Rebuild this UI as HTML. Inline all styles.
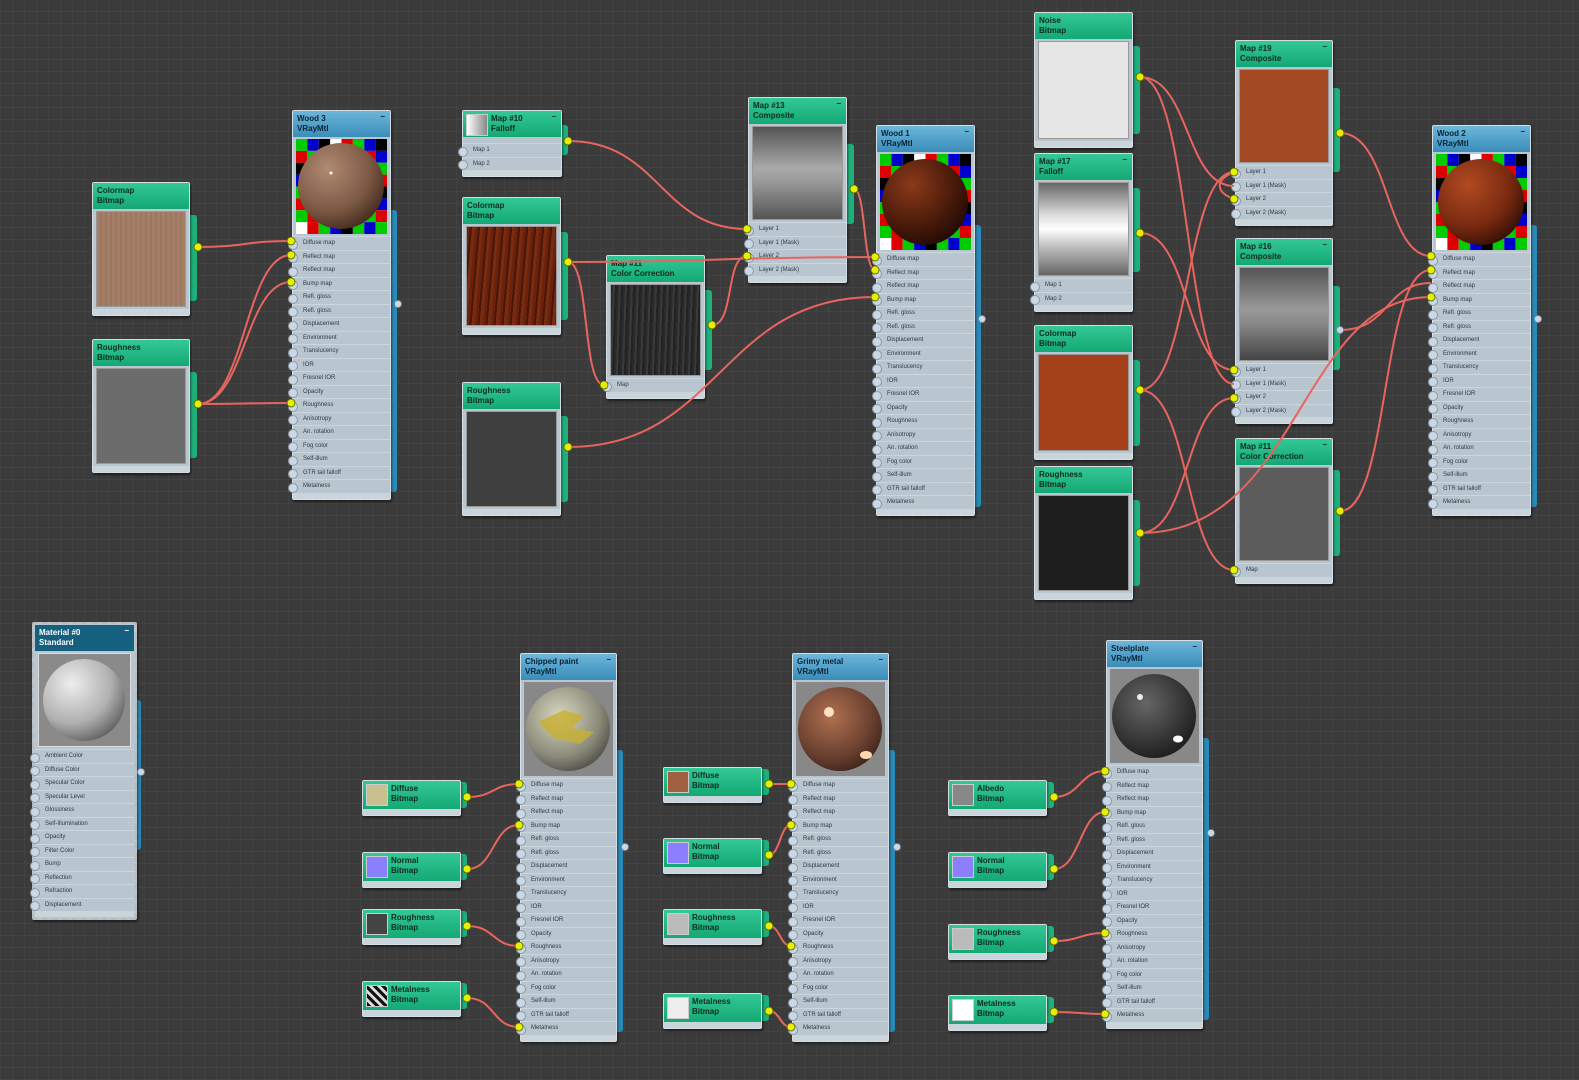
<!DOCTYPE html>
<html><head><meta charset="utf-8">
<style>
*{margin:0;padding:0;box-sizing:border-box}
body{width:1579px;height:1080px;overflow:hidden;position:relative;
background-color:#3b3b3b;
background-image:repeating-linear-gradient(0deg,rgba(255,255,255,.035) 0 1px,transparent 1px 12px),repeating-linear-gradient(90deg,rgba(255,255,255,.035) 0 1px,transparent 1px 12px);
font-family:"Liberation Sans",sans-serif}
.n{position:absolute;background:#b9c6cf;border:1px solid #d5dee4;border-radius:2px;box-shadow:1px 2px 2px rgba(0,0,0,.5)}
.gh,.bh,.sh{height:26px;padding:3px 4px;font-size:8px;font-weight:bold;line-height:10px;color:#0d2a20;position:relative}
.gh{background:linear-gradient(#33c896,#14a874)}
.bh{background:linear-gradient(#6cb6da,#3a8dba);color:#0c2233}
.sh{background:#16607f;color:#fff}
.x{position:absolute;right:5px;top:1px;font-weight:bold}
.img{margin:2px 3px;border:1px solid #999}
.ft{height:6px;background:#c9d4db}
.r{height:13.5px;line-height:13.5px;font-size:6px;color:#2c3a44;padding-left:10px;border-top:1px solid #cbd6de;position:relative;white-space:nowrap}
.r:before{content:"";position:absolute;left:-5px;top:2.5px;width:8px;height:8px;border-radius:50%;background:#c9d8e4;border:1px solid #8a9aa6}
.pv{margin:2px 3px;position:relative;overflow:hidden}
.tab{position:absolute;background:#1db07a;border-radius:0 3px 3px 0}
.btab{position:absolute;background:#2a8ab8;border-radius:0 3px 3px 0}
.sm .gh{height:28px;padding-left:28px}
.th{position:absolute;left:3px;top:3px;width:22px;height:22px;border:1px solid #ccc}
</style></head><body>
<svg width="0" height="0" style="position:absolute"><defs>
<symbol id="chk" viewBox="0 0 8 8" preserveAspectRatio="none">
<rect width="8" height="8" fill="#fff"/>
<g>
<rect x="0" y="0" width="1" height="1" fill="#0c0"/><rect x="1" y="0" width="1" height="1" fill="#00c"/><rect x="2" y="0" width="1" height="1" fill="#000"/><rect x="4" y="0" width="1" height="1" fill="#d00"/><rect x="5" y="0" width="1" height="1" fill="#0c0"/><rect x="6" y="0" width="1" height="1" fill="#00c"/><rect x="7" y="0" width="1" height="1" fill="#000"/>
<rect x="0" y="1" width="1" height="1" fill="#d00"/><rect x="1" y="1" width="1" height="1" fill="#0c0"/><rect x="3" y="1" width="1" height="1" fill="#00c"/><rect x="5" y="1" width="1" height="1" fill="#000"/><rect x="6" y="1" width="1" height="1" fill="#d00"/><rect x="7" y="1" width="1" height="1" fill="#00c"/>
<rect x="0" y="2" width="1" height="1" fill="#000"/><rect x="7" y="2" width="1" height="1" fill="#0c0"/>
<rect x="0" y="3" width="1" height="1" fill="#00c"/><rect x="7" y="3" width="1" height="1" fill="#d00"/>
<rect x="0" y="4" width="1" height="1" fill="#0c0"/><rect x="7" y="4" width="1" height="1" fill="#000"/>
<rect x="0" y="5" width="1" height="1" fill="#d00"/><rect x="7" y="5" width="1" height="1" fill="#00c"/>
<rect x="0" y="6" width="1" height="1" fill="#0c0"/><rect x="1" y="6" width="1" height="1" fill="#d00"/><rect x="6" y="6" width="1" height="1" fill="#0c0"/><rect x="7" y="6" width="1" height="1" fill="#d00"/>
<rect x="1" y="7" width="1" height="1" fill="#d00"/><rect x="2" y="7" width="1" height="1" fill="#0c0"/><rect x="3" y="7" width="1" height="1" fill="#00c"/><rect x="4" y="7" width="1" height="1" fill="#000"/><rect x="5" y="7" width="1" height="1" fill="#0c0"/><rect x="6" y="7" width="1" height="1" fill="#00c"/><rect x="7" y="7" width="1" height="1" fill="#0c0"/>
</g></symbol>
<radialGradient id="wl" cx=".35" cy=".3" r=".8"><stop offset="0" stop-color="#b08a72"/><stop offset=".6" stop-color="#7e5a45"/><stop offset="1" stop-color="#3a2418"/></radialGradient>
<radialGradient id="wd" cx=".35" cy=".3" r=".8"><stop offset="0" stop-color="#8a3a1a"/><stop offset=".6" stop-color="#4a1a0a"/><stop offset="1" stop-color="#1a0804"/></radialGradient>
<radialGradient id="wr" cx=".35" cy=".3" r=".8"><stop offset="0" stop-color="#b04a22"/><stop offset=".6" stop-color="#7a2a10"/><stop offset="1" stop-color="#2a0c04"/></radialGradient>
<radialGradient id="cp" cx=".4" cy=".35" r=".8"><stop offset="0" stop-color="#d8d8c0"/><stop offset=".6" stop-color="#8a8a7a"/><stop offset="1" stop-color="#333"/></radialGradient>
<radialGradient id="gm" cx=".4" cy=".35" r=".8"><stop offset="0" stop-color="#b07050"/><stop offset=".6" stop-color="#6a4030"/><stop offset="1" stop-color="#2a1810"/></radialGradient>
<radialGradient id="sp" cx=".4" cy=".35" r=".8"><stop offset="0" stop-color="#666"/><stop offset=".6" stop-color="#333"/><stop offset="1" stop-color="#111"/></radialGradient>
<radialGradient id="st" cx=".35" cy=".3" r=".8"><stop offset="0" stop-color="#eee"/><stop offset=".6" stop-color="#b0b0b0"/><stop offset="1" stop-color="#555"/></radialGradient>
</defs></svg>

<!-- blue side bars -->
<div class="btab" style="left:390px;top:210px;width:7px;height:282px"></div>
<div class="btab" style="left:974px;top:225px;width:7px;height:282px"></div>
<div class="btab" style="left:1530px;top:225px;width:7px;height:282px"></div>
<div class="btab" style="left:616px;top:750px;width:7px;height:282px"></div>
<div class="btab" style="left:888px;top:750px;width:7px;height:282px"></div>
<div class="btab" style="left:1202px;top:738px;width:7px;height:282px"></div>
<div class="btab" style="left:135px;top:700px;width:6px;height:150px"></div>

<!-- green tabs -->
<div class="tab" style="left:189px;top:215px;width:8px;height:86px"></div>
<div class="tab" style="left:189px;top:372px;width:8px;height:86px"></div>
<div class="tab" style="left:561px;top:125px;width:7px;height:30px"></div>
<div class="tab" style="left:560px;top:232px;width:8px;height:88px"></div>
<div class="tab" style="left:560px;top:416px;width:8px;height:86px"></div>
<div class="tab" style="left:704px;top:290px;width:8px;height:80px"></div>
<div class="tab" style="left:846px;top:144px;width:8px;height:80px"></div>
<div class="tab" style="left:1132px;top:46px;width:8px;height:88px"></div>
<div class="tab" style="left:1132px;top:188px;width:8px;height:84px"></div>
<div class="tab" style="left:1132px;top:360px;width:8px;height:86px"></div>
<div class="tab" style="left:1132px;top:500px;width:8px;height:86px"></div>
<div class="tab" style="left:1332px;top:88px;width:8px;height:84px"></div>
<div class="tab" style="left:1332px;top:286px;width:8px;height:84px"></div>
<div class="tab" style="left:1332px;top:470px;width:8px;height:86px"></div>

<!-- Map nodes -->
<div class="n" style="left:92px;top:182px;width:98px"><div class="gh">Colormap<br>Bitmap</div>
<div class="img" style="height:96px;background:repeating-linear-gradient(90deg,#a57e66 0 3px,#9c7660 3px 5px)"></div><div class="ft"></div></div>
<div class="n" style="left:92px;top:339px;width:98px"><div class="gh">Roughness<br>Bitmap</div>
<div class="img" style="height:96px;background:#6c6c6c"></div><div class="ft"></div></div>

<div class="n" style="left:462px;top:110px;width:100px"><div class="gh" style="padding-left:28px">Map #10<br>Falloff<div class="th" style="background:linear-gradient(90deg,#fff,#888)"></div><span class="x">−</span></div>
<div style="height:6px"></div><div class="r">Map 1</div><div class="r">Map 2</div><div class="ft"></div></div>

<div class="n" style="left:462px;top:197px;width:99px"><div class="gh">Colormap<br>Bitmap</div>
<div class="img" style="height:100px;background:repeating-linear-gradient(95deg,#6a220c 0 3px,#4a1608 3px 5px,#7a2c10 5px 8px)"></div><div class="ft"></div></div>
<div class="n" style="left:462px;top:382px;width:99px"><div class="gh">Roughness<br>Bitmap</div>
<div class="img" style="height:96px;background:#3f3f3f"></div><div class="ft"></div></div>

<div class="n" style="left:606px;top:255px;width:99px"><div class="gh">Map #11<br>Color Correction</div>
<div class="img" style="height:92px;background:repeating-linear-gradient(92deg,#2a2a2a 0 2px,#3a3a3a 2px 4px,#222 4px 6px)"></div><div class="r">Map</div><div class="ft"></div></div>

<div class="n" style="left:748px;top:97px;width:99px"><div class="gh">Map #13<br>Composite<span class="x">−</span></div>
<div class="img" style="height:94px;background:linear-gradient(#555,#aaa 45%,#999 60%,#555)"></div>
<div class="r">Layer 1</div><div class="r">Layer 1 (Mask)</div><div class="r">Layer 2</div><div class="r">Layer 2 (Mask)</div><div class="ft"></div></div>

<div class="n" style="left:1034px;top:12px;width:99px"><div class="gh">Noise<br>Bitmap</div>
<div class="img" style="height:98px;background:#e6e6e6"></div><div class="ft"></div></div>
<div class="n" style="left:1034px;top:153px;width:99px"><div class="gh">Map #17<br>Falloff<span class="x">−</span></div>
<div class="img" style="height:94px;background:linear-gradient(#666,#ddd 35%,#fff 50%,#ccc 65%,#666)"></div>
<div class="r">Map 1</div><div class="r">Map 2</div><div class="ft"></div></div>
<div class="n" style="left:1034px;top:325px;width:99px"><div class="gh">Colormap<br>Bitmap</div>
<div class="img" style="height:97px;background:#a4401a"></div><div class="ft"></div></div>
<div class="n" style="left:1034px;top:466px;width:99px"><div class="gh">Roughness<br>Bitmap</div>
<div class="img" style="height:96px;background:#1e1e1e"></div><div class="ft"></div></div>

<div class="n" style="left:1235px;top:40px;width:98px"><div class="gh">Map #19<br>Composite<span class="x">−</span></div>
<div class="img" style="height:94px;background:#a44a22"></div>
<div class="r">Layer 1</div><div class="r">Layer 1 (Mask)</div><div class="r">Layer 2</div><div class="r">Layer 2 (Mask)</div><div class="ft"></div></div>
<div class="n" style="left:1235px;top:238px;width:98px"><div class="gh">Map #16<br>Composite<span class="x">−</span></div>
<div class="img" style="height:94px;background:linear-gradient(#555,#999 45%,#888 60%,#444)"></div>
<div class="r">Layer 1</div><div class="r">Layer 1 (Mask)</div><div class="r">Layer 2</div><div class="r">Layer 2 (Mask)</div><div class="ft"></div></div>
<div class="n" style="left:1235px;top:438px;width:98px"><div class="gh">Map #11<br>Color Correction<span class="x">−</span></div>
<div class="img" style="height:94px;background:#5c5c5c"></div><div class="r">Map</div><div class="ft"></div></div>

<!-- Material nodes -->
<div class="n" style="left:292px;top:110px;width:99px"><div class="bh">Wood 3<br>VRayMtl<span class="x">−</span></div>
<div class="pv" style="height:95px"><svg width="91" height="95" style="display:block"><use href="#chk" width="91" height="95"/><circle cx="45" cy="47" r="43" fill="url(#wl)"/><circle cx="35" cy="34" r="1.5" fill="#fff"/></svg></div>
<div class="r">Diffuse map</div><div class="r">Reflect map</div><div class="r">Reflect map</div><div class="r">Bump map</div><div class="r">Refl. gloss</div><div class="r">Refl. gloss</div><div class="r">Displacement</div><div class="r">Environment</div><div class="r">Translucency</div><div class="r">IOR</div><div class="r">Fresnel IOR</div><div class="r">Opacity</div><div class="r">Roughness</div><div class="r">Anisotropy</div><div class="r">An. rotation</div><div class="r">Fog color</div><div class="r">Self-illum</div><div class="r">GTR tail falloff</div><div class="r">Metalness</div><div class="ft"></div></div>

<div class="n" style="left:876px;top:125px;width:99px"><div class="bh">Wood 1<br>VRayMtl<span class="x">−</span></div>
<div class="pv" style="height:96px"><svg width="91" height="96" style="display:block"><use href="#chk" width="91" height="96"/><circle cx="45" cy="48" r="43" fill="url(#wd)"/></svg></div>
<div class="r">Diffuse map</div><div class="r">Reflect map</div><div class="r">Reflect map</div><div class="r">Bump map</div><div class="r">Refl. gloss</div><div class="r">Refl. gloss</div><div class="r">Displacement</div><div class="r">Environment</div><div class="r">Translucency</div><div class="r">IOR</div><div class="r">Fresnel IOR</div><div class="r">Opacity</div><div class="r">Roughness</div><div class="r">Anisotropy</div><div class="r">An. rotation</div><div class="r">Fog color</div><div class="r">Self-illum</div><div class="r">GTR tail falloff</div><div class="r">Metalness</div><div class="ft"></div></div>

<div class="n" style="left:1432px;top:125px;width:99px"><div class="bh">Wood 2<br>VRayMtl<span class="x">−</span></div>
<div class="pv" style="height:96px"><svg width="91" height="96" style="display:block"><use href="#chk" width="91" height="96"/><circle cx="45" cy="48" r="43" fill="url(#wr)"/></svg></div>
<div class="r">Diffuse map</div><div class="r">Reflect map</div><div class="r">Reflect map</div><div class="r">Bump map</div><div class="r">Refl. gloss</div><div class="r">Refl. gloss</div><div class="r">Displacement</div><div class="r">Environment</div><div class="r">Translucency</div><div class="r">IOR</div><div class="r">Fresnel IOR</div><div class="r">Opacity</div><div class="r">Roughness</div><div class="r">Anisotropy</div><div class="r">An. rotation</div><div class="r">Fog color</div><div class="r">Self-illum</div><div class="r">GTR tail falloff</div><div class="r">Metalness</div><div class="ft"></div></div>

<div class="n" style="left:520px;top:653px;width:97px"><div class="bh">Chipped paint<br>VRayMtl<span class="x">−</span></div>
<div class="pv" style="height:94px;background:#888"><svg width="89" height="94" style="display:block"><circle cx="44" cy="47" r="42" fill="url(#cp)"/><path d="M14 40 L40 28 L60 34 L48 46 L70 50 L56 62 L30 56 Z" fill="#c8b030" opacity=".8"/></svg></div>
<div class="r">Diffuse map</div><div class="r">Reflect map</div><div class="r">Reflect map</div><div class="r">Bump map</div><div class="r">Refl. gloss</div><div class="r">Refl. gloss</div><div class="r">Displacement</div><div class="r">Environment</div><div class="r">Translucency</div><div class="r">IOR</div><div class="r">Fresnel IOR</div><div class="r">Opacity</div><div class="r">Roughness</div><div class="r">Anisotropy</div><div class="r">An. rotation</div><div class="r">Fog color</div><div class="r">Self-illum</div><div class="r">GTR tail falloff</div><div class="r">Metalness</div><div class="ft"></div></div>

<div class="n" style="left:792px;top:653px;width:97px"><div class="bh">Grimy metal<br>VRayMtl<span class="x">−</span></div>
<div class="pv" style="height:94px;background:#888"><svg width="89" height="94" style="display:block"><circle cx="44" cy="47" r="42" fill="url(#gm)"/><circle cx="33" cy="30" r="5" fill="#ffe0c0"/><ellipse cx="70" cy="73" rx="6" ry="4" fill="#ffd8b0"/></svg></div>
<div class="r">Diffuse map</div><div class="r">Reflect map</div><div class="r">Reflect map</div><div class="r">Bump map</div><div class="r">Refl. gloss</div><div class="r">Refl. gloss</div><div class="r">Displacement</div><div class="r">Environment</div><div class="r">Translucency</div><div class="r">IOR</div><div class="r">Fresnel IOR</div><div class="r">Opacity</div><div class="r">Roughness</div><div class="r">Anisotropy</div><div class="r">An. rotation</div><div class="r">Fog color</div><div class="r">Self-illum</div><div class="r">GTR tail falloff</div><div class="r">Metalness</div><div class="ft"></div></div>

<div class="n" style="left:1106px;top:640px;width:97px"><div class="bh">Steelplate<br>VRayMtl<span class="x">−</span></div>
<div class="pv" style="height:94px;background:#888"><svg width="89" height="94" style="display:block"><circle cx="44" cy="47" r="42" fill="url(#sp)"/><circle cx="30" cy="28" r="3" fill="#eee"/><ellipse cx="68" cy="70" rx="5" ry="3.5" fill="#fff"/></svg></div>
<div class="r">Diffuse map</div><div class="r">Reflect map</div><div class="r">Reflect map</div><div class="r">Bump map</div><div class="r">Refl. gloss</div><div class="r">Refl. gloss</div><div class="r">Displacement</div><div class="r">Environment</div><div class="r">Translucency</div><div class="r">IOR</div><div class="r">Fresnel IOR</div><div class="r">Opacity</div><div class="r">Roughness</div><div class="r">Anisotropy</div><div class="r">An. rotation</div><div class="r">Fog color</div><div class="r">Self-illum</div><div class="r">GTR tail falloff</div><div class="r">Metalness</div><div class="ft"></div></div>

<div class="n" style="left:32px;top:622px;width:105px;border:2px dashed #bbb;padding:1px"><div class="sh">Material #0<br>Standard<span class="x">−</span></div>
<div class="pv" style="height:94px;background:#8a8a8a;border:1px solid #ddd"><svg width="93" height="94" style="display:block"><circle cx="45" cy="46" r="41" fill="url(#st)"/></svg></div>
<div class="r">Ambient Color</div><div class="r">Diffuse Color</div><div class="r">Specular Color</div><div class="r">Specular Level</div><div class="r">Glossiness</div><div class="r">Self-Illumination</div><div class="r">Opacity</div><div class="r">Filter Color</div><div class="r">Bump</div><div class="r">Reflection</div><div class="r">Refraction</div><div class="r">Displacement</div><div class="ft"></div></div>

<!-- small bitmap nodes -->
<div class="tab" style="left:460px;top:782px;width:7px;height:26px"></div>
<div class="tab" style="left:460px;top:854px;width:7px;height:26px"></div>
<div class="tab" style="left:460px;top:911px;width:7px;height:26px"></div>
<div class="tab" style="left:460px;top:983px;width:7px;height:26px"></div>
<div class="tab" style="left:762px;top:769px;width:7px;height:26px"></div>
<div class="tab" style="left:762px;top:840px;width:7px;height:26px"></div>
<div class="tab" style="left:762px;top:911px;width:7px;height:26px"></div>
<div class="tab" style="left:762px;top:995px;width:7px;height:26px"></div>
<div class="tab" style="left:1047px;top:782px;width:7px;height:26px"></div>
<div class="tab" style="left:1047px;top:854px;width:7px;height:26px"></div>
<div class="tab" style="left:1047px;top:926px;width:7px;height:26px"></div>
<div class="tab" style="left:1047px;top:997px;width:7px;height:26px"></div>

<div class="n sm" style="left:362px;top:780px;width:99px"><div class="gh"><div class="th" style="background:#c8c090"></div>Diffuse<br>Bitmap</div><div class="ft"></div></div>
<div class="n sm" style="left:362px;top:852px;width:99px"><div class="gh"><div class="th" style="background:#8a80ff"></div>Normal<br>Bitmap</div><div class="ft"></div></div>
<div class="n sm" style="left:362px;top:909px;width:99px"><div class="gh"><div class="th" style="background:#444"></div>Roughness<br>Bitmap</div><div class="ft"></div></div>
<div class="n sm" style="left:362px;top:981px;width:99px"><div class="gh"><div class="th" style="background:repeating-linear-gradient(45deg,#111 0 3px,#ddd 3px 6px)"></div>Metalness<br>Bitmap</div><div class="ft"></div></div>

<div class="n sm" style="left:663px;top:767px;width:99px"><div class="gh"><div class="th" style="background:#a06040"></div>Diffuse<br>Bitmap</div><div class="ft"></div></div>
<div class="n sm" style="left:663px;top:838px;width:99px"><div class="gh"><div class="th" style="background:#8a80ff"></div>Normal<br>Bitmap</div><div class="ft"></div></div>
<div class="n sm" style="left:663px;top:909px;width:99px"><div class="gh"><div class="th" style="background:#bbb"></div>Roughness<br>Bitmap</div><div class="ft"></div></div>
<div class="n sm" style="left:663px;top:993px;width:99px"><div class="gh"><div class="th" style="background:#eee"></div>Metalness<br>Bitmap</div><div class="ft"></div></div>

<div class="n sm" style="left:948px;top:780px;width:99px"><div class="gh"><div class="th" style="background:#888"></div>Albedo<br>Bitmap</div><div class="ft"></div></div>
<div class="n sm" style="left:948px;top:852px;width:99px"><div class="gh"><div class="th" style="background:#8a80ff"></div>Normal<br>Bitmap</div><div class="ft"></div></div>
<div class="n sm" style="left:948px;top:924px;width:99px"><div class="gh"><div class="th" style="background:#bbb"></div>Roughness<br>Bitmap</div><div class="ft"></div></div>
<div class="n sm" style="left:948px;top:995px;width:99px"><div class="gh"><div class="th" style="background:#fff"></div>Metalness<br>Bitmap</div><div class="ft"></div></div>

<!-- wires & dots -->
<svg width="1579" height="1080" style="position:absolute;left:0;top:0" fill="none">
<g stroke="#e8655f" stroke-width="2">
<path d="M198 247 C245 247 245 241 291 241"/>
<path d="M198 404 C245 404 245 255 291 255"/>
<path d="M198 404 C245 404 245 282 291 282"/>
<path d="M198 404 C245 404 245 403 291 403"/>
<path d="M568 141 C660 141 660 229 747 229"/>
<path d="M568 262 C590 262 582 385 604 385"/>
<path d="M568 262 C720 262 720 257 875 257"/>
<path d="M712 325 C735 325 725 256 747 256"/>
<path d="M854 189 C866 189 863 270 875 270"/>
<path d="M568 447 C720 447 720 297 875 297"/>
<path d="M1140 77 C1190 77 1185 186 1234 186"/>
<path d="M1140 77 C1190 77 1185 384 1234 384"/>
<path d="M1140 233 C1190 233 1185 370 1234 370"/>
<path d="M1140 390 C1190 390 1185 172 1234 172"/>
<path d="M1140 390 C1190 390 1185 570 1234 570"/>
<path d="M1140 533 C1190 533 1185 398 1234 398"/>
<path d="M1140 533 C1300 533 1300 297 1431 297"/>
<path d="M1234 172 C1215 180 1215 192 1234 199"/>
<path d="M1340 133 C1390 133 1385 256 1431 256"/>
<path d="M1340 511 C1390 511 1380 270 1431 270"/>
<path d="M1340 330 C1390 330 1385 283 1431 283"/>
<path d="M467 797 C495 797 492 784 519 784"/>
<path d="M467 869 C495 869 492 825 519 825"/>
<path d="M467 926 C495 926 492 946 519 946"/>
<path d="M467 998 C495 998 492 1027 519 1027"/>
<path d="M769 784 C780 784 780 784 791 784"/>
<path d="M769 855 C780 855 780 825 791 825"/>
<path d="M769 926 C780 926 780 946 791 946"/>
<path d="M769 1011 C780 1011 780 1027 791 1027"/>
<path d="M1054 797 C1080 797 1080 771 1105 771"/>
<path d="M1054 869 C1080 869 1080 812 1105 812"/>
<path d="M1054 941 C1080 941 1080 933 1105 933"/>
<path d="M1054 1012 C1080 1012 1080 1014 1105 1014"/>
</g>
<g fill="#e4f000" stroke="#556000" stroke-width=".8">
<circle cx="198" cy="247" r="4"/><circle cx="198" cy="404" r="4"/>
<circle cx="291" cy="241" r="4"/><circle cx="291" cy="255" r="4"/><circle cx="291" cy="282" r="4"/><circle cx="291" cy="403" r="4"/>
<circle cx="568" cy="141" r="4"/><circle cx="568" cy="262" r="4"/><circle cx="568" cy="447" r="4"/>
<circle cx="604" cy="385" r="4"/><circle cx="712" cy="325" r="4"/><circle cx="747" cy="229" r="4"/><circle cx="747" cy="256" r="4"/><circle cx="854" cy="189" r="4"/>
<circle cx="875" cy="257" r="4"/><circle cx="875" cy="270" r="4"/><circle cx="875" cy="297" r="4"/>
<circle cx="1140" cy="77" r="4"/><circle cx="1140" cy="233" r="4"/><circle cx="1140" cy="390" r="4"/><circle cx="1140" cy="533" r="4"/>
<circle cx="1234" cy="172" r="4"/><circle cx="1234" cy="199" r="4"/><circle cx="1234" cy="370" r="4"/><circle cx="1234" cy="398" r="4"/><circle cx="1234" cy="570" r="4"/>
<circle cx="1340" cy="133" r="4"/><circle cx="1340" cy="511" r="4"/>
<circle cx="1431" cy="256" r="4"/><circle cx="1431" cy="270" r="4"/><circle cx="1431" cy="297" r="4"/>
<circle cx="467" cy="797" r="4"/><circle cx="467" cy="869" r="4"/><circle cx="467" cy="926" r="4"/><circle cx="467" cy="998" r="4"/>
<circle cx="519" cy="784" r="4"/><circle cx="519" cy="825" r="4"/><circle cx="519" cy="946" r="4"/><circle cx="519" cy="1027" r="4"/>
<circle cx="769" cy="784" r="4"/><circle cx="769" cy="855" r="4"/><circle cx="769" cy="926" r="4"/><circle cx="769" cy="1011" r="4"/>
<circle cx="791" cy="784" r="4"/><circle cx="791" cy="825" r="4"/><circle cx="791" cy="946" r="4"/><circle cx="791" cy="1027" r="4"/>
<circle cx="1054" cy="797" r="4"/><circle cx="1054" cy="869" r="4"/><circle cx="1054" cy="941" r="4"/><circle cx="1054" cy="1012" r="4"/>
<circle cx="1105" cy="771" r="4"/><circle cx="1105" cy="812" r="4"/><circle cx="1105" cy="933" r="4"/><circle cx="1105" cy="1014" r="4"/>
</g>
<g fill="#c9d8e4" stroke="#7a8a96" stroke-width=".8">
<circle cx="398" cy="304" r="3.5"/><circle cx="982" cy="319" r="3.5"/><circle cx="1538" cy="319" r="3.5"/>
<circle cx="625" cy="847" r="3.5"/><circle cx="897" cy="847" r="3.5"/><circle cx="1211" cy="833" r="3.5"/><circle cx="141" cy="772" r="3.5"/><circle cx="1340" cy="330" r="3.5"/>
</g>
</svg>
</body></html>
